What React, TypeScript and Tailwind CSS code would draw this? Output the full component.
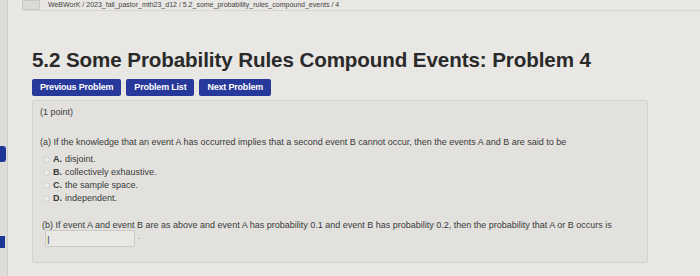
import React from 'react';

const font = { fontFamily: '"Liberation Sans", Arial, sans-serif' };

const options = [
  { letter: 'A', text: 'disjoint.' },
  { letter: 'B', text: 'collectively exhaustive.' },
  { letter: 'C', text: 'the sample space.' },
  { letter: 'D', text: 'independent.' },
];

const NavButton: React.FC<{ label: string }> = ({ label }) => (
  <div className="flex items-center h-[17px] px-[8px] bg-[#27399b] text-white text-[9px] font-bold rounded-[2px] tracking-[-0.2px]">
    {label}
  </div>
);

export default function App() {
  return (
    <div className="relative w-[700px] h-[276px] overflow-hidden bg-[#e8e7e3] text-[#333]" style={font}>
      {/* left edge strip */}
      <div className="absolute left-0 top-0 h-full w-[8px] bg-[#dddcd8] border-r border-[#cfcec9]" />
      <div className="absolute left-0 top-[146px] w-[6px] h-[16px] bg-[#1f3699] rounded-r-[3px]" />
      <div className="absolute left-0 top-[236px] w-[5px] h-[12px] bg-[#1f3699]" />

      <div className="pl-[22px]">
        {/* breadcrumb */}
        <div className="flex items-center h-[11px] border-b border-[#d6d5d1]">
          <div className="w-[18px] h-[10px] bg-[#dcdbd7] border border-[#c9c8c4] rounded-b-[2px] mr-[8px] self-start" />
          <span className="text-[7px] text-[#444] leading-[8px]">
            WeBWorK / 2023_fall_pastor_mth23_d12 / 5.2_some_probability_rules_compound_events / 4
          </span>
        </div>

        <div className="pl-[10px]">
          <h1 className="mt-[37px] text-[20.6px] font-bold leading-[24px] text-[#2a2a2a] tracking-[-0.1px]">
            5.2 Some Probability Rules Compound Events: Problem 4
          </h1>

          <div className="flex gap-[5px] mt-[7px]">
            <NavButton label="Previous Problem" />
            <NavButton label="Problem List" />
            <NavButton label="Next Problem" />
          </div>

          <div className="mt-[4px] w-[616px] h-[163px] bg-[#e2e1dd] border border-[#d3d2ce] rounded-[2px] pl-[7px] pt-[5px] text-[9px] text-[#3a3a3a]">
            <div>(1 point)</div>
            <div className="mt-[16px]">
              (a) If the knowledge that an event A has occurred implies that a second event B cannot occur, then the events A and B are said to be
            </div>
            <div className="mt-[5px] flex flex-col gap-[2.5px] pl-[3px]">
              {options.map((o) => (
                <div key={o.letter} className="flex items-center h-[10.5px]">
                  <span className="w-[7px] h-[7px] rounded-full border border-[#cfcecb] bg-[#ecebe8] mr-[3px]" />
                  <span className="font-bold">{o.letter}.</span>
                  <span className="ml-[3px]">{o.text}</span>
                </div>
              ))}
            </div>
            <div className="mt-[16px] pl-[2px] leading-[11px]">
              (b) If event A and event B are as above and event A has probability 0.1 and event B has probability 0.2, then the probability that A or B occurs is
            </div>
            <div className="flex items-end mt-[-1px] pl-[5px]">
              <div className="relative w-[90px] h-[17px] bg-[#e9e8e5] border border-[#cbcac6] rounded-[2px]">
                <span className="absolute left-[1px] top-[5px] text-[10px] leading-none text-[#555]">I</span>
              </div>
              <span className="ml-[3px] mb-[4px] text-[#777]">.</span>
            </div>
          </div>
        </div>
      </div>
    </div>
  );
}
